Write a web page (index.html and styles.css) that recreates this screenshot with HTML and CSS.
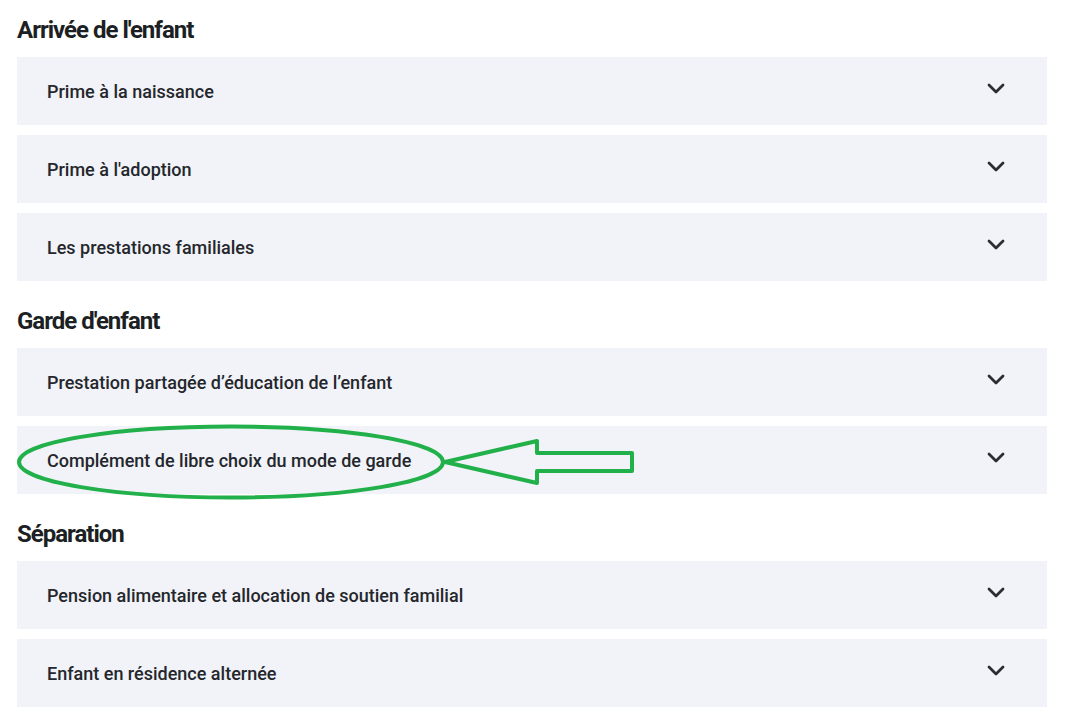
FILE: index.html
```html
<!DOCTYPE html>
<html lang="fr">
<head>
<meta charset="utf-8">
<title>Prestations</title>
<link rel="stylesheet" href="styles.css">
</head>
<body>
<main class="page">
  <section class="group first">
    <h2 class="group-title">Arrivée de l'enfant</h2>
    <ul class="list">
      <li class="item"><span class="item-label">Prime à la naissance</span><svg class="chev" viewBox="0 0 18 11"><path d="M2 2l7 7 7-7"/></svg></li>
      <li class="item"><span class="item-label">Prime à l'adoption</span><svg class="chev" viewBox="0 0 18 11"><path d="M2 2l7 7 7-7"/></svg></li>
      <li class="item"><span class="item-label">Les prestations familiales</span><svg class="chev" viewBox="0 0 18 11"><path d="M2 2l7 7 7-7"/></svg></li>
    </ul>
  </section>
  <section class="group">
    <h2 class="group-title">Garde d'enfant</h2>
    <ul class="list">
      <li class="item"><span class="item-label">Prestation partagée d’éducation de l’enfant</span><svg class="chev" viewBox="0 0 18 11"><path d="M2 2l7 7 7-7"/></svg></li>
      <li class="item"><span class="item-label">Complément de libre choix du mode de garde</span><svg class="chev" viewBox="0 0 18 11"><path d="M2 2l7 7 7-7"/></svg></li>
    </ul>
  </section>
  <section class="group">
    <h2 class="group-title">Séparation</h2>
    <ul class="list">
      <li class="item"><span class="item-label">Pension alimentaire et allocation de soutien familial</span><svg class="chev" viewBox="0 0 18 11"><path d="M2 2l7 7 7-7"/></svg></li>
      <li class="item"><span class="item-label">Enfant en résidence alternée</span><svg class="chev" viewBox="0 0 18 11"><path d="M2 2l7 7 7-7"/></svg></li>
    </ul>
  </section>
  <svg class="annot" viewBox="0 0 1065 713" width="1065" height="713">
    <ellipse cx="231" cy="462" rx="212" ry="35.5"/>
    <polygon points="445,462 537,441 537,453 632,453 632,471 537,471 537,483"/>
  </svg>
</main>
</body>
</html>
```

FILE: styles.css
```css
html, body {
  margin: 0;
  padding: 0;
  background: #ffffff;
}

body {
  font-family: Roboto, "Liberation Sans", Arial, sans-serif;
  color: #22252b;
}

.page {
  position: relative;
  width: 1030px;
  padding: 0 18px 0 17px;
}

.group {
  margin-top: 25px;
}

.group.first {
  margin-top: 0;
  padding-top: 15px;
}

.group-title {
  margin: 0 0 12px;
  font-size: 24px;
  line-height: 30px;
  font-weight: 700;
  letter-spacing: -1px;
  color: #1c1f23;
}

.list {
  list-style: none;
  margin: 0;
  padding: 0;
  display: flex;
  flex-direction: column;
  gap: 10px;
}

.item {
  height: 68px;
  box-sizing: border-box;
  background: #f2f3f8;
  display: flex;
  align-items: center;
  justify-content: space-between;
  padding: 0 42px 0 30px;
}

.item-label {
  font-size: 18px;
  font-weight: 500;
  color: #24272c;
}

.chev {
  width: 18px;
  height: 11px;
  margin-top: -6px;
  fill: none;
  stroke: #2a2d33;
  stroke-width: 2.8;
  stroke-linecap: round;
  stroke-linejoin: round;
}

.annot {
  position: absolute;
  left: 0;
  top: 0;
  pointer-events: none;
  fill: none;
  stroke: #22b04b;
  stroke-width: 4;
  stroke-linejoin: round;
}
```
